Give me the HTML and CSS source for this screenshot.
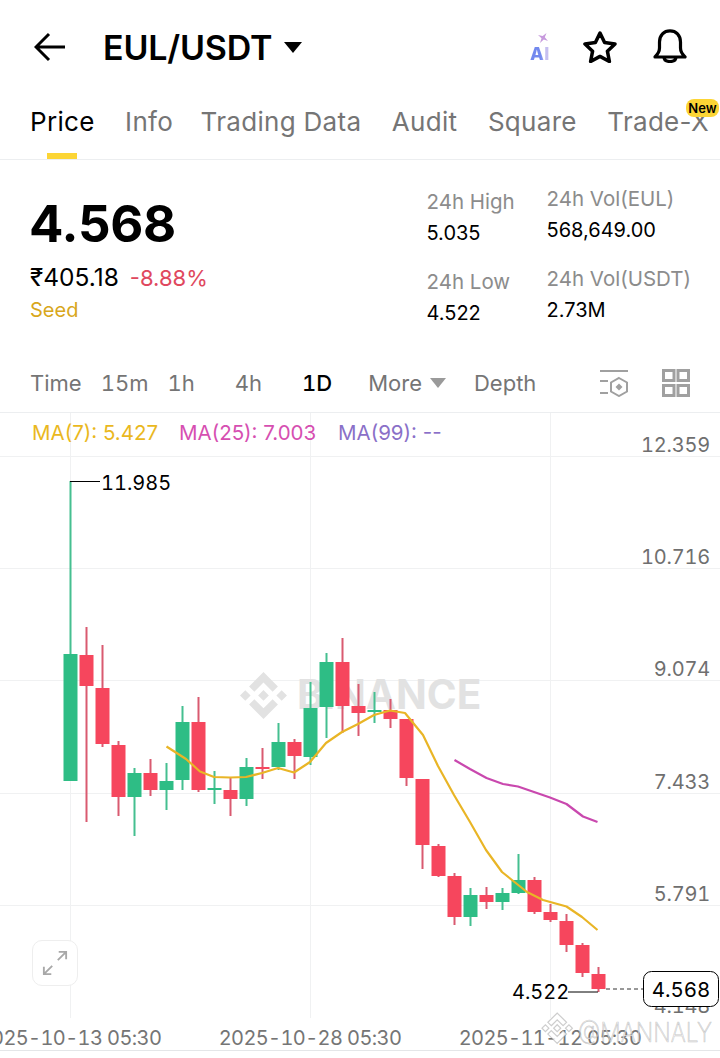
FILE: index.html
```html
<!DOCTYPE html>
<html lang="en">
<head>
    <meta charset="UTF-8">
    <meta name="viewport" content="width=device-width, initial-scale=1.0">
    <title>EUL/USDT</title>
    <link rel="stylesheet" href="styles.css">
</head>
<body>
    <div class="page">
        <header class="top-bar">
            <svg class="back-icon" viewBox="0 0 32 32"><path d="M31 15H2M15 2 2 15l13 13"/></svg>
            <h1 class="pair">EUL/USDT</h1>
            <span class="pair-caret"></span>
            <div class="top-icons">
                <div class="ai-badge">
                    <svg class="ai-spark" viewBox="0 0 12 12"><path class="spark-a" d="M9.500 1 7.800 5.200 11 9 6.800 7.500 3 11 4.500 6.300 1 3l4.700 1z"/></svg>
                    <span class="ai-text">AI</span>
                </div>
                <svg class="star-icon" viewBox="0 0 34 32"><path d="M17 2l4.600 9.600 10.400 1.400-7.600 7.200 2 10.300-9.400-5.100-9.400 5.100 2-10.300L2 13l10.400-1.400z"/></svg>
                <svg class="bell-icon" viewBox="0 0 34 34"><path d="M2 28c3-3 4.500-5 4.500-9v-6C6.500 6 11 1.800 17 1.800S27.500 6 27.500 13v6c0 4 1.500 6 4.500 9zM11 28c0 3 2.500 4.500 6 4.500s6-1.500 6-4.500"/></svg>
            </div>
        </header>

        <nav class="tabs">
            <span class="tab active">Price</span>
            <span class="tab tab-info">Info</span>
            <span class="tab">Trading Data</span>
            <span class="tab">Audit</span>
            <span class="tab">Square</span>
            <span class="tab">Trade-X<span class="new-badge">New</span></span>
        </nav>

        <section class="stats">
            <div class="price-block">
                <div class="last-price">4.568</div>
                <div class="price-sub"><span class="fiat">₹405.18</span><span class="change">-8.88%</span></div>
                <div class="seed">Seed</div>
            </div>
            <div class="stat-col">
                <div class="stat"><div class="stat-label">24h High</div><div class="stat-value">5.035</div></div>
                <div class="stat"><div class="stat-label">24h Low</div><div class="stat-value">4.522</div></div>
            </div>
            <div class="stat-col stat-col-right">
                <div class="stat"><div class="stat-label">24h Vol(EUL)</div><div class="stat-value">568,649.00</div></div>
                <div class="stat"><div class="stat-label">24h Vol(USDT)</div><div class="stat-value">2.73M</div></div>
            </div>
        </section>

        <div class="intervals">
            <span class="interval">Time</span>
            <span class="interval">15m</span>
            <span class="interval">1h</span>
            <span class="interval wide">4h</span>
            <span class="interval wide selected">1D</span>
            <span class="interval more">More<span class="more-caret"></span></span>
            <span class="interval depth">Depth</span>
            <svg class="indicator-icon" viewBox="0 0 30 28"><path d="M1 2h28M1 12h8M1 24h8"/><path d="M20 9l8 4.500v9L20 27l-8-4.500v-9z"/><path class="dot" d="M20 14.500l3.500 3.500-3.500 3.500-3.500-3.500z"/></svg>
            <svg class="layout-icon" viewBox="0 0 28 28"><rect x="1.500" y="1.500" width="10.500" height="10"/><rect x="16" y="1.500" width="10.500" height="10"/><rect x="1.500" y="16.500" width="10.500" height="10"/><rect x="16" y="16.500" width="10.500" height="10"/></svg>
        </div>

        <div class="chart">
            <svg class="chart-svg" viewBox="0 413 720 638" width="720" height="638">
                <path class="grid" d="M0 456.500H720M0 568.500H720M0 680.500H720M0 793.500H720M0 905.500H720M70.500 413V1018M310.500 413V1018M550.500 413V1018"/>

                <text class="legend ma7" x="32" y="440">MA(7): 5.427</text>
                <text class="legend ma25" x="179" y="440">MA(25): 7.003</text>
                <text class="legend ma99" x="338" y="440">MA(99): --</text>

                <text class="axis" x="710" y="452">12.359</text>
                <text class="axis" x="710" y="564">10.716</text>
                <text class="axis" x="710" y="676">9.074</text>
                <text class="axis" x="710" y="789">7.433</text>
                <text class="axis" x="710" y="901">5.791</text>
                <text class="axis" x="710" y="1013">4.148</text>

                <path class="wm-logo" transform="translate(240 672) scale(0.371)" d="M38.730 53.200l24.590-24.580 24.600 24.600 14.300-14.310L63.320 0 24.430 38.900zM0 63.310l14.300-14.300 14.310 14.300-14.310 14.300zM38.730 73.410l24.590 24.590 24.600-24.600 14.310 14.290-38.900 38.910-38.910-38.880zM98 63.310l14.300-14.300 14.310 14.300-14.310 14.300zM77.830 63.300L63.320 48.780 48.810 63.280l14.510 14.500z"/>
                <text class="wm-text" x="297" y="709">BINANCE</text>

                <g class="wick-up">
                    <path d="M70.500 481V781M134.500 768V836M166.500 763V810M182.500 706V790M214.500 771V804M246.500 758V806M278.500 723V770M310.500 682V765M326.500 653V738M374.500 692V723M470.500 888V926M502.500 888V910M518.500 854V894"/>
                </g>
                <g class="wick-down">
                    <path d="M86.500 627V822M102.500 645V747M118.500 741V816M150.500 759V796M198.500 697V792M230.500 777V816M262.500 748V779M294.500 739V779M342.500 638V733M358.500 684V736M390.500 699V728M406.500 719V786M422.500 779V869M438.500 844V877M454.500 873V925M486.500 887V909M534.500 877V914M550.500 904V922M566.500 914V952M582.500 943V977M598.500 967V992"/>
                </g>
                <g class="body-up">
                    <rect x="63.500" y="654" width="14" height="127"/>
                    <rect x="127.500" y="773" width="14" height="24"/>
                    <rect x="159.500" y="781" width="14" height="9"/>
                    <rect x="175.500" y="722" width="14" height="58"/>
                    <rect x="207.500" y="788" width="14" height="2"/>
                    <rect x="239.500" y="767" width="14" height="32"/>
                    <rect x="271.500" y="742" width="14" height="25"/>
                    <rect x="303.500" y="708" width="14" height="49"/>
                    <rect x="319.500" y="662" width="14" height="45"/>
                    <rect x="367.500" y="710" width="14" height="2"/>
                    <rect x="463.500" y="895" width="14" height="22"/>
                    <rect x="495.500" y="893" width="14" height="9"/>
                    <rect x="511.500" y="880" width="14" height="13"/>
                </g>
                <g class="body-down">
                    <rect x="79.500" y="655" width="14" height="31"/>
                    <rect x="95.500" y="688" width="14" height="56"/>
                    <rect x="111.500" y="745" width="14" height="52"/>
                    <rect x="143.500" y="773" width="14" height="17"/>
                    <rect x="191.500" y="722" width="14" height="68"/>
                    <rect x="223.500" y="790" width="14" height="9"/>
                    <rect x="255.500" y="767" width="14" height="2"/>
                    <rect x="287.500" y="742" width="14" height="14"/>
                    <rect x="335.500" y="662" width="14" height="44"/>
                    <rect x="351.500" y="706" width="14" height="7"/>
                    <rect x="383.500" y="710" width="14" height="9"/>
                    <rect x="399.500" y="719" width="14" height="59"/>
                    <rect x="415.500" y="779" width="14" height="66"/>
                    <rect x="431.500" y="846" width="14" height="30"/>
                    <rect x="447.500" y="876" width="14" height="41"/>
                    <rect x="479.500" y="895" width="14" height="7"/>
                    <rect x="527.500" y="880" width="14" height="32"/>
                    <rect x="543.500" y="912" width="14" height="8"/>
                    <rect x="559.500" y="921" width="14" height="24"/>
                    <rect x="575.500" y="945" width="14" height="28"/>
                    <rect x="591.500" y="974" width="14" height="15"/>
                </g>

                <path class="line-ma7" d="M166.500 746.500L186 759 200 771.500 214 777 230 777.500 246 777 262 773 278 768 294 772.500 310 762 326 743 342 732 358 724 374 715 390 710.500 405 713 423 735 438 766 454 795 470 822 486 850 502 872 512 880 527 892 543 900 566.500 906.500 582 917 597.500 930"/>
                <path class="line-ma25" d="M454.500 760L470 769 486.500 778 503 784 518 786.500 534 792 550 797.500 566.500 804 583 816.500 597.500 822"/>

                <path class="pointer" d="M70 481.500H100M568 992H598"/>
                <text class="mark" x="101" y="490">11.985</text>
                <text class="mark" x="512" y="999">4.522</text>

                <path class="last-dash" d="M606 989H643"/>
                <rect class="last-box" x="643.500" y="971.500" width="75" height="35" rx="8"/>
                <text class="last-text" x="681" y="996.500">4.568</text>

                <text class="date" x="70" y="1045">2025-10-13 05:30</text>
                <text class="date" x="310" y="1045">2025-10-28 05:30</text>
                <text class="date" x="550" y="1045">2025-11-12 05:30</text>

                <path class="copy-logo" transform="translate(542 1013) scale(0.24)" d="M38.730 53.200l24.590-24.580 24.600 24.600 14.300-14.310L63.320 0 24.430 38.900zM0 63.310l14.300-14.300 14.310 14.300-14.310 14.300zM38.730 73.410l24.590 24.590 24.600-24.600 14.310 14.290-38.900 38.910-38.910-38.880zM98 63.310l14.300-14.300 14.310 14.300-14.310 14.300zM77.830 63.300L63.320 48.780 48.810 63.280l14.510 14.500z"/>
                <text class="copy-text" x="578" y="1042" textLength="134" lengthAdjust="spacingAndGlyphs">@MANNALY</text>
            </svg>
            <button class="expand-button">
                <svg viewBox="0 0 28 28"><path d="M17 11 26 2M18 2h8v8M11 17l-9 9M2 18v8h8"/></svg>
            </button>
        </div>
    </div>
</body>
</html>
```

FILE: styles.css
```css
* {
    box-sizing: border-box;
}
body {
    margin: 0;
    background: #fff;
    color: #000;
    font-family: "Inter", "Liberation Sans", sans-serif;
}
.page {
    width: 720px;
    height: 1058px;
    overflow: hidden;
}
.top-bar {
    display: flex;
    align-items: center;
    height: 94px;
    padding-left: 34px;
}
.back-icon {
    width: 32px;
    height: 32px;
    margin-top: 2px;
    fill: none;
    stroke: #000;
    stroke-width: 3;
}
.pair {
    margin: 0 0 0 37px;
    font-size: 34px;
    font-weight: 600;
    letter-spacing: -0.2px;
}
.pair-caret {
    width: 0;
    height: 0;
    margin-left: 12px;
    border-left: 9px solid transparent;
    border-right: 9px solid transparent;
    border-top: 11px solid #000;
}
.top-icons {
    display: flex;
    align-items: center;
    margin-left: auto;
    padding-right: 33px;
}
.ai-badge {
    display: flex;
    flex-direction: column;
    align-items: center;
    width: 24px;
}
.ai-spark {
    width: 12px;
    height: 12px;
    margin-left: 6px;
}
.spark-a {
    fill: #c79add;
}
.ai-text {
    margin-top: 2px;
    font-size: 18px;
    line-height: 16px;
    font-weight: 800;
    letter-spacing: 0.5px;
    background: linear-gradient(90deg, #7389ee 55%, #c6bff0 80%);
    -webkit-background-clip: text;
    background-clip: text;
    color: transparent;
}
.star-icon {
    width: 34px;
    height: 32px;
    margin-left: 31px;
    fill: none;
    stroke: #000;
    stroke-width: 3.500;
    stroke-linejoin: round;
}
.bell-icon {
    width: 34px;
    height: 34px;
    margin-bottom: 2px;
    margin-left: 36px;
    fill: none;
    stroke: #000;
    stroke-width: 3.200;
    stroke-linejoin: round;
}
.tabs {
    display: flex;
    gap: 30.500px;
    height: 66px;
    padding: 9px 0 0 30px;
    border-bottom: 1px solid #eceef0;
    white-space: nowrap;
    letter-spacing: 0.3px;
}
.tab {
    position: relative;
    height: 56px;
    font-size: 26px;
    line-height: 38px;
    color: #757575;
}
.tab-info {
    margin-right: -3px;
}
.tab.active {
    color: #000;
}
.tab.active::after {
    content: "";
    position: absolute;
    left: 17px;
    bottom: 0;
    width: 30px;
    height: 6px;
    background: #fcd535;
}
.new-badge {
    position: absolute;
    top: -4px;
    right: -10px;
    width: 33px;
    height: 18px;
    border-radius: 8px;
    background: #fcd535;
    color: #000;
    font-size: 13px;
    line-height: 18px;
    font-weight: 600;
    text-align: center;
    letter-spacing: 0;
}
.stats {
    display: flex;
    height: 192px;
    padding: 25px 0 0 30px;
}
.price-block {
    width: 396.500px;
}
.last-price {
    margin-left: -1px;
    font-size: 51px;
    line-height: 78px;
    font-weight: 700;
    letter-spacing: -0.3px;
}
.price-sub {
    display: flex;
    align-items: baseline;
    gap: 11px;
    margin-top: -4px;
    margin-bottom: -1px;
    font-size: 22px;
    line-height: 36px;
}
.fiat {
    font-size: 24.500px;
}
.seed {
    font-size: 20px;
    line-height: 30px;
    color: #d8a71c;
}
.change {
    color: #e0485e;
}
.stat-col {
    width: 120px;
    display: flex;
    flex-direction: column;
    gap: 17px;
    margin-top: 1px;
}
.stat-col-right {
    margin-top: -2px;
}
.stat-label {
    font-size: 20.500px;
    line-height: 31px;
    color: #8c8c8c;
    white-space: nowrap;
}
.stat-value {
    font-size: 20px;
    line-height: 32px;
    white-space: nowrap;
}
.intervals {
    display: flex;
    align-items: center;
    gap: 19px;
    height: 61px;
    padding: 2px 0 0 30px;
    border-bottom: 1px solid #eceef0;
    font-size: 22px;
    color: #757575;
    font-variant-numeric: tabular-nums;
}
.interval.wide {
    margin-left: 21px;
}
.interval.selected {
    color: #000;
    font-weight: 500;
}
.interval.more {
    display: flex;
    align-items: center;
    margin-left: 17px;
}
.more-caret {
    width: 0;
    height: 0;
    margin-left: 8px;
    border-left: 8px solid transparent;
    border-right: 8px solid transparent;
    border-top: 10px solid #9a9a9a;
}
.interval.depth {
    margin-left: 9px;
}
.indicator-icon {
    width: 30px;
    height: 28px;
    margin-left: 44px;
    fill: none;
    stroke: #a0a0a0;
    stroke-width: 2;
}
.indicator-icon .dot {
    fill: #a0a0a0;
    stroke: none;
}
.layout-icon {
    width: 28px;
    height: 28px;
    margin-left: 14px;
    fill: none;
    stroke: #a0a0a0;
    stroke-width: 3;
}
.chart {
    position: relative;
    height: 638px;
    border-bottom: 1px solid #e4e6e8;
}
.chart-svg {
    display: block;
}
.grid {
    stroke: #f0f1f2;
    stroke-width: 1;
    fill: none;
}
.legend {
    font-size: 20.500px;
}
.ma7 {
    fill: #eab81e;
}
.ma25 {
    fill: #d64fb1;
}
.ma99 {
    fill: #8a70c8;
}
.axis {
    font-size: 20px;
    fill: #6f6f6f;
    text-anchor: end;
    font-variant-numeric: tabular-nums;
    letter-spacing: -0.2px;
}
.wm-logo {
    fill: #e2e2e2;
}
.wm-text {
    font-size: 40.400px;
    font-weight: 700;
    fill: #e2e2e2;
}
.wick-up path {
    stroke: #45bf90;
    stroke-width: 2;
    fill: none;
}
.wick-down path {
    stroke: #d95a70;
    stroke-width: 2;
    fill: none;
}
.body-up {
    fill: #2ebd85;
}
.body-down {
    fill: #f6465d;
}
.line-ma7 {
    fill: none;
    stroke: #e9b526;
    stroke-width: 2.200;
    stroke-linejoin: round;
}
.line-ma25 {
    fill: none;
    stroke: #c948ae;
    stroke-width: 2.200;
    stroke-linejoin: round;
}
.pointer {
    stroke: #000;
    stroke-width: 1;
    fill: none;
}
.mark {
    font-size: 20px;
    fill: #000;
    font-variant-numeric: tabular-nums;
}
.last-dash {
    stroke: #333;
    stroke-width: 1;
    stroke-dasharray: 4 3;
    fill: none;
}
.last-box {
    fill: #fff;
    stroke: #000;
    stroke-width: 1;
}
.last-text {
    font-size: 20.500px;
    fill: #000;
    text-anchor: middle;
    font-variant-numeric: tabular-nums;
}
.date {
    font-size: 20px;
    fill: #757575;
    text-anchor: middle;
    font-variant-numeric: tabular-nums;
    letter-spacing: -0.6px;
}
.copy-logo {
    fill: rgba(255, 255, 255, 0.85);
    stroke: rgba(130, 130, 130, 0.4);
    stroke-width: 5;
}
.copy-text {
    font-size: 27px;
    font-weight: 200;
    fill: rgba(255, 255, 255, 0.8);
    stroke: rgba(130, 130, 130, 0.45);
    stroke-width: 0.700;
}
.expand-button {
    position: absolute;
    left: 32px;
    top: 527px;
    width: 46px;
    height: 46px;
    padding: 9px;
    background: #fff;
    border: 1.500px solid #eeeeee;
    border-radius: 10px;
}
.expand-button svg {
    display: block;
    width: 100%;
    height: 100%;
    fill: none;
    stroke: #a8a8a8;
    stroke-width: 2;
}
```
